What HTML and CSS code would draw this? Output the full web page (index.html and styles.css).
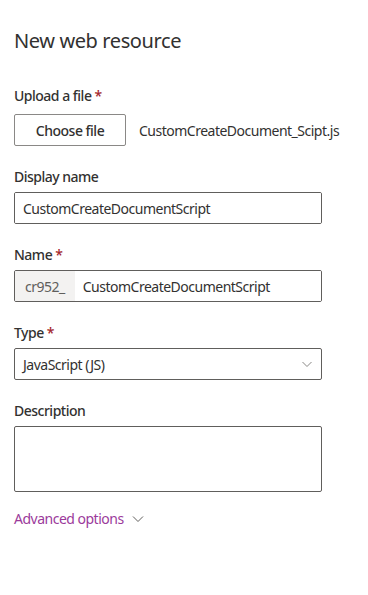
FILE: index.html
```html
<!DOCTYPE html>
<html lang="en">
<head>
    <meta charset="UTF-8">
    <meta name="viewport" content="width=device-width, initial-scale=1.0">
    <title>New web resource</title>
    <link rel="stylesheet" href="styles.css">
</head>
<body>
    <div class="panel">
        <h1 class="panel-title">New web resource</h1>

        <div class="field field-upload">
            <label class="field-label">Upload a file <span class="required">*</span></label>
            <div class="upload-row">
                <button type="button" class="btn-choose">Choose file</button>
                <span class="file-name">CustomCreateDocument_Scipt.js</span>
            </div>
        </div>

        <div class="field">
            <label class="field-label" for="display">Display name</label>
            <div class="control">
                <input type="text" id="display" value="CustomCreateDocumentScript">
            </div>
        </div>

        <div class="field">
            <label class="field-label" for="name">Name <span class="required">*</span></label>
            <div class="control">
                <span class="prefix">cr952_</span>
                <input type="text" id="name" value="CustomCreateDocumentScript">
            </div>
        </div>

        <div class="field">
            <label class="field-label">Type <span class="required">*</span></label>
            <div class="control dropdown">
                <span class="dropdown-value">JavaScript (JS)</span>
                <svg class="chevron" width="12" height="12" viewBox="0 0 12 12">
                    <path d="M1.5 4 L6 8.5 L10.5 4" fill="none" stroke="#8a8886" stroke-width="1"/>
                </svg>
            </div>
        </div>

        <div class="field">
            <label class="field-label" for="desc">Description</label>
            <textarea id="desc" class="textarea"></textarea>
        </div>

        <a class="advanced" href="#">Advanced options
            <svg width="12" height="12" viewBox="0 0 12 12">
                <path d="M1 3.5 L6 8.5 L11 3.5" fill="none" stroke="#605e5c" stroke-width="1"/>
            </svg>
        </a>
    </div>
</body>
</html>
```

FILE: styles.css
```css
body {
    margin: 0;
    font-family: 'Segoe UI', 'Noto Sans', 'Open Sans', sans-serif;
    color: #323130;
    background: #fff;
    letter-spacing: -0.5px;
}

.panel {
    padding: 27px 0 0 14px;
    width: 308px;
}

.panel-title {
    margin: 0 0 31px;
    font-size: 20px;
    line-height: 28px;
    font-weight: 400;
    letter-spacing: -0.4px;
    color: #323130;
}

.field {
    margin-bottom: 21px;
}

.field-label {
    display: block;
    font-size: 14px;
    line-height: 20px;
    font-weight: 500;
    margin-bottom: 5px;
}

.field-upload .field-label {
    margin-bottom: 8px;
}

.required {
    color: #a4262c;
}

.upload-row {
    display: flex;
    align-items: center;
    gap: 13px;
}

.btn-choose {
    flex-shrink: 0;
    width: 112px;
    height: 32px;
    padding: 0;
    border: 1px solid #8a8886;
    border-radius: 2px;
    background: #fff;
    font-family: inherit;
    font-size: 14px;
    font-weight: 500;
    letter-spacing: -0.5px;
    color: #323130;
}

.file-name {
    font-size: 14px;
    white-space: nowrap;
}

.control {
    display: flex;
    align-items: stretch;
    height: 32px;
    box-sizing: border-box;
    border: 1px solid #605e5c;
    border-radius: 2px;
    overflow: hidden;
}

.control input {
    flex: 1;
    min-width: 0;
    border: none;
    outline: none;
    padding: 0 8px;
    font-family: inherit;
    font-size: 14px;
    letter-spacing: -0.5px;
    color: #323130;
    background: #fff;
}

.prefix {
    display: flex;
    align-items: center;
    padding: 0 10px;
    background: #f3f2f1;
    color: #605e5c;
    font-size: 14px;
}

.dropdown {
    align-items: center;
    justify-content: space-between;
    padding: 0 8px;
}

.dropdown-value {
    font-size: 14px;
}

.textarea {
    display: block;
    width: 100%;
    height: 66px;
    box-sizing: border-box;
    border: 1px solid #605e5c;
    border-radius: 2px;
    resize: none;
    font-family: inherit;
    margin: 0;
}

.advanced {
    display: flex;
    width: fit-content;
    align-items: center;
    gap: 8px;
    margin-top: -4px;
    font-size: 14px;
    line-height: 20px;
    color: #9b3a9b;
    text-decoration: none;
}
```
